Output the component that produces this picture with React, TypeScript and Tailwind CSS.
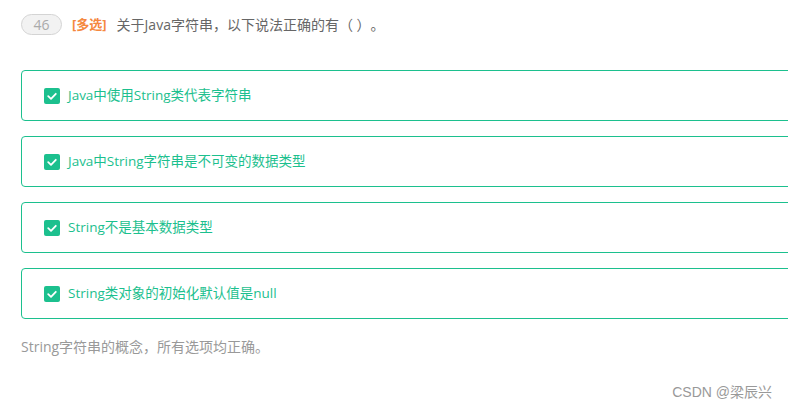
const options = [
  'Java中使用String类代表字符串',
  'Java中String字符串是不可变的数据类型',
  'String不是基本数据类型',
  'String类对象的初始化默认值是null',
];

function CheckBox() {
  return (
    <span className="flex h-4 w-4 flex-shrink-0 items-center justify-center rounded-[2px] bg-[#1cc08e]">
      <svg viewBox="0 0 16 16" className="h-4 w-4" fill="none">
        <path d="M4.2 8.2 L7 10.8 L11.8 5.8" stroke="#fff" strokeWidth="1.8" strokeLinecap="round" strokeLinejoin="round" />
      </svg>
    </span>
  );
}

export default function App() {
  return (
    <div
      className="relative h-[411px] w-full overflow-hidden bg-white [text-spacing-trim:space-all]"
      style={{ fontFamily: '"Open Sans", "Noto Sans CJK SC", sans-serif' }}
    >
      <div className="w-[800px] pl-[21px] pt-[14px]">
        <div className="flex h-[21px] items-center">
          <span className="flex h-[21px] w-[41px] items-center justify-center rounded-full border border-[#d4d4d4] bg-[#f2f2f2] text-[14px] text-[#aaaaaa]">
            46
          </span>
          <span className="ml-[10px] text-[13px] font-bold text-[#f5883f]">[多选]</span>
          <span className="ml-[10px] text-[14px] text-[#666666]">关于Java字符串，以下说法正确的有（ ）。</span>
        </div>

        <div className="mt-[35px] flex flex-col gap-[15px]">
          {options.map((o) => (
            <div
              key={o}
              className="flex h-[51px] items-center gap-2 rounded-[4px] border border-[#1cc08e] pl-[22px]"
            >
              <CheckBox />
              <span className="text-[13.5px] text-[#1cc08e]">{o}</span>
            </div>
          ))}
        </div>

        <p className="mt-[18px] text-[14px] leading-5 text-[#999999]">String字符串的概念，所有选项均正确。</p>
      </div>

      <div
        className="absolute bottom-[8px] right-[16px] text-[14px] text-[#999999]"
        style={{ fontFamily: '"Liberation Sans", "Noto Sans CJK SC", sans-serif' }}
      >
        CSDN @梁辰兴
      </div>
    </div>
  );
}
